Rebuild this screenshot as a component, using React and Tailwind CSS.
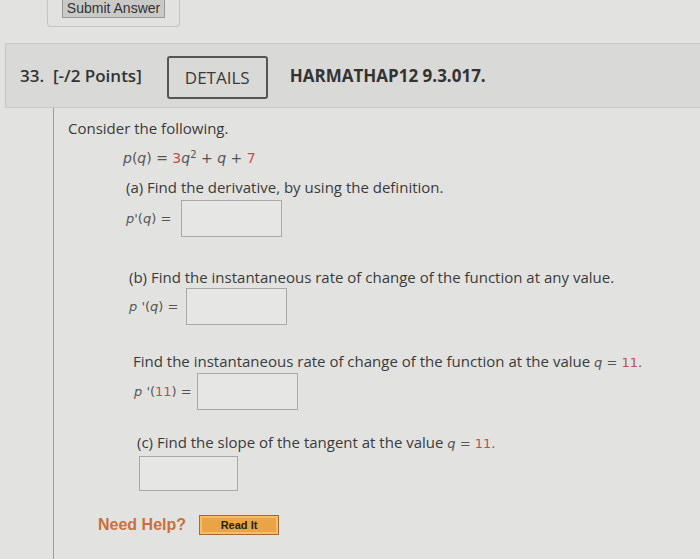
export default function App() {
  const sans = { fontFamily: '"Open Sans", "Noto Sans", sans-serif' };
  const math = { fontFamily: '"DejaVu Sans", Verdana, sans-serif' };
  const Box = ({ cls }) => (
    <div className={`border border-[#a9a9a9] bg-[#e6e6e4] ${cls || "h-[37px] w-[101px]"}`} />
  );
  return (
    <div className="relative h-[559px] w-[700px] overflow-hidden bg-[#e2e2e0] text-[#3b3b3b]" style={sans}>
      {/* top submit area */}
      <div className="ml-[47px] flex h-[27px] w-[133px] items-start justify-center rounded-b-[4px] border border-t-0 border-[#c4c4c2]">
        <div
          className="mt-[-3px] flex h-[21px] w-[103px] items-end justify-center border border-[#9a9a9a] bg-[#c9c9c8] pb-[2px] text-[14px] leading-none text-[#333]"
          style={{ fontFamily: '"Liberation Sans", Arial, sans-serif' }}
        >
          Submit Answer
        </div>
      </div>

      {/* header band */}
      <div className="ml-[5px] mt-[16px] flex h-[65px] items-center border-y border-l border-[#c8c8c6] bg-[#d9d9d7] pl-[14px]">
        <span className="text-[17px] font-semibold text-[#333]">33.&nbsp; [-/2 Points]</span>
        <div className="ml-[25px] mt-[4px] flex h-[43px] w-[101px] items-center justify-center rounded-[3px] border-2 border-[#555] text-[17px] text-[#3a3a3a]">
          DETAILS
        </div>
        <span className="ml-[22px] text-[17px] font-bold text-[#333]">HARMATHAP12 9.3.017.</span>
      </div>

      {/* content */}
      <div className="ml-[53px] h-[460px] border-l border-[#9c9c9c] pl-[14px] pt-[10px] text-[15px]">
        <div className="leading-[20px]">Consider the following.</div>

        <div className="ml-[55px] mt-[10px] text-[14px] leading-[20px] text-[#555]" style={math}>
          <i>p</i>(<i>q</i>) = <span className="text-[#c0504d]">3</span><i>q</i>
          <sup className="text-[10px]">2</sup> + <i>q</i> + <span className="text-[#c0504d]">7</span>
        </div>

        <div className="ml-[58px] mt-[9px] leading-[20px]">(a) Find the derivative, by using the definition.</div>
        <div className="ml-[58px] mt-[3px] flex items-center">
          <span className="w-[55px] text-[13px] text-[#555]" style={math}>
            <i>p</i>'(<i>q</i>) =
          </span>
          <Box />
        </div>

        <div className="ml-[61px] mt-[30px] leading-[20px]">
          (b) Find the instantaneous rate of change of the function at any value.
        </div>
        <div className="ml-[61px] mt-[1px] flex items-center">
          <span className="w-[57px] text-[13px] text-[#555]" style={math}>
            <i>p</i> '(<i>q</i>) =
          </span>
          <Box />
        </div>

        <div className="ml-[65px] mt-[26px] leading-[20px]">
          Find the instantaneous rate of change of the function at the value{" "}
          <span className="text-[13px] leading-none text-[#555]" style={math}>
            <i>q</i> = <span className="text-[#c0504d]">11</span>.
          </span>
        </div>
        <div className="ml-[66px] mt-[2px] flex items-center">
          <span className="w-[63px] text-[13px] text-[#555]" style={math}>
            <i>p</i> '(<span className="text-[#c0504d]">11</span>) =
          </span>
          <Box />
        </div>

        <div className="ml-[69px] mt-[22px] leading-[20px]">
          (c) Find the slope of the tangent at the value{" "}
          <span className="text-[13px] leading-none text-[#555]" style={math}>
            <i>q</i> = <span className="text-[#c0504d]">11</span>.
          </span>
        </div>
        <div className="ml-[71px] mt-[4px]">
          <Box cls="h-[35px] w-[99px]" />
        </div>

        <div className="ml-[30px] mt-[22px] flex items-center" style={{ fontFamily: '"Liberation Sans", Arial, sans-serif' }}>
          <span className="text-[16px] font-bold text-[#c9703c]">Need Help?</span>
          <div className="ml-[13px] flex h-[20px] w-[80px] items-center justify-center border border-[#a8682e] bg-[#eba445] text-[11px] font-bold text-[#222] shadow-[inset_0_0_0_2px_#f3be6a]">
            Read It
          </div>
        </div>
      </div>
    </div>
  );
}
